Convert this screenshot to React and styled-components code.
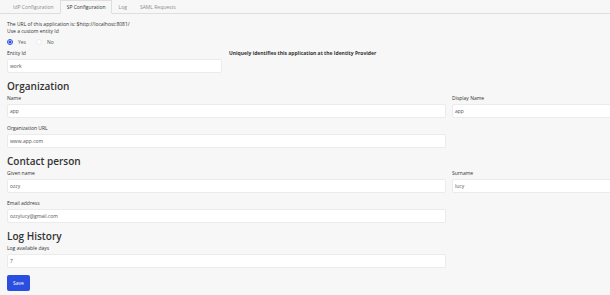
import React from 'react';
import styled, { createGlobalStyle } from 'styled-components';

const GlobalStyle = createGlobalStyle`
  html, body {
    margin: 0;
    padding: 0;
    overflow: hidden;
    background: #f7f7f7;
  }
  body {
    font-family: "Open Sans", "DejaVu Sans", sans-serif;
    color: #333333;
  }
`;

const Page = styled.div`
  width: 900px;
`;

const TabBar = styled.div`
  display: flex;
  height: 13px;
  padding-left: 6px;
  border-bottom: 1px solid #dedede;
`;

const Tab = styled.div`
  display: flex;
  align-items: center;
  padding: 0 5px 0 6px;
  height: 14px;
  box-sizing: border-box;
  font-size: 5px;
  color: ${(p) => (p.active ? '#333333' : '#8c8c8c')};
  background: ${(p) => (p.active ? '#f7f7f7' : 'transparent')};
  border: 1px solid ${(p) => (p.active ? '#dedede' : 'transparent')};
  border-bottom-color: ${(p) => (p.active ? '#f7f7f7' : 'transparent')};
  border-radius: 1px 1px 0 0;
`;

const Content = styled.div`
  padding: 7px 7px 0 7px;
`;

const InfoLine = styled.div`
  font-size: 5px;
  line-height: 7px;
`;

const RadioRow = styled.div`
  display: flex;
  align-items: center;
  gap: 6px;
  height: 8px;
  margin-top: 3px;
`;

const RadioOption = styled.label`
  display: flex;
  align-items: center;
  gap: 5px;
  font-size: 5px;
  color: #555555;
  min-width: 23px;
`;

const RadioDot = styled.span`
  width: 6px;
  height: 6px;
  border-radius: 50%;
  box-sizing: border-box;
  border: 1px solid ${(p) => (p.checked ? '#2a4fe0' : '#ececec')};
  background: ${(p) => (p.checked ? 'radial-gradient(circle, #2a4fe0 0 1.4px, #ffffff 1.7px)' : '#ffffff')};
`;

const EntityRow = styled.div`
  display: flex;
  align-items: flex-start;
  gap: 7px;
  margin-top: 4px;
`;

const Hint = styled.div`
  font-size: 5px;
  line-height: 6px;
  font-weight: 700;
  color: #333333;
`;

const Heading = styled.h2`
  margin: 6px 0 2px 0;
  font-size: 10px;
  line-height: 14px;
  font-weight: 600;
  color: #333333;
`;

const Grid = styled.div`
  display: grid;
  grid-template-columns: 439px 439px;
  column-gap: 6px;
  row-gap: 7px;
  align-items: start;
`;

const Field = styled.div`
  display: flex;
  flex-direction: column;
  width: ${(p) => p.width || 'auto'};
`;

const Label = styled.div`
  font-size: 5px;
  line-height: 6px;
  color: #333333;
  margin-bottom: 3px;
`;

const Input = styled.div`
  height: 14px;
  box-sizing: border-box;
  background: #ffffff;
  border: 1px solid #ebebeb;
  border-radius: 2px;
  padding: 0 2px;
  display: flex;
  align-items: center;
  font-size: 5px;
  color: #555555;
`;

const SaveButton = styled.button`
  margin-top: 5px;
  width: 23px;
  height: 16px;
  padding: 0;
  border: none;
  border-radius: 2px;
  background: #2a4fe0;
  color: #ffffff;
  font-family: "Open Sans", sans-serif;
  font-size: 5px;
`;

function TextField({ label, value, width }) {
  return (
    <Field width={width}>
      <Label>{label}</Label>
      <Input>{value}</Input>
    </Field>
  );
}

export default function App() {
  return (
    <Page>
      <GlobalStyle />
      <TabBar>
        <Tab>IdP Configuration</Tab>
        <Tab active>SP Configuration</Tab>
        <Tab>Log</Tab>
        <Tab>SAML Requests</Tab>
      </TabBar>
      <Content>
        <InfoLine>The URL of this application is: $http://localhost:8081/</InfoLine>
        <InfoLine>Use a custom entity Id</InfoLine>
        <RadioRow>
          <RadioOption><RadioDot checked />Yes</RadioOption>
          <RadioOption><RadioDot />No</RadioOption>
        </RadioRow>
        <EntityRow>
          <TextField label="Entity Id" value="work" width="215px" />
          <Hint>Uniquely identifies this application at the Identity Provider</Hint>
        </EntityRow>

        <Heading>Organization</Heading>
        <Grid>
          <TextField label="Name" value="app" />
          <TextField label="Display Name" value="app" />
          <TextField label="Organization URL" value="www.app.com" />
        </Grid>

        <Heading>Contact person</Heading>
        <Grid>
          <TextField label="Given name" value="ozzy" />
          <TextField label="Surname" value="lucy" />
          <TextField label="Email address" value="ozzylucy@gmail.com" />
        </Grid>

        <Heading>Log History</Heading>
        <Grid>
          <TextField label="Log available days" value="7" />
        </Grid>
        <SaveButton>Save</SaveButton>
      </Content>
    </Page>
  );
}
